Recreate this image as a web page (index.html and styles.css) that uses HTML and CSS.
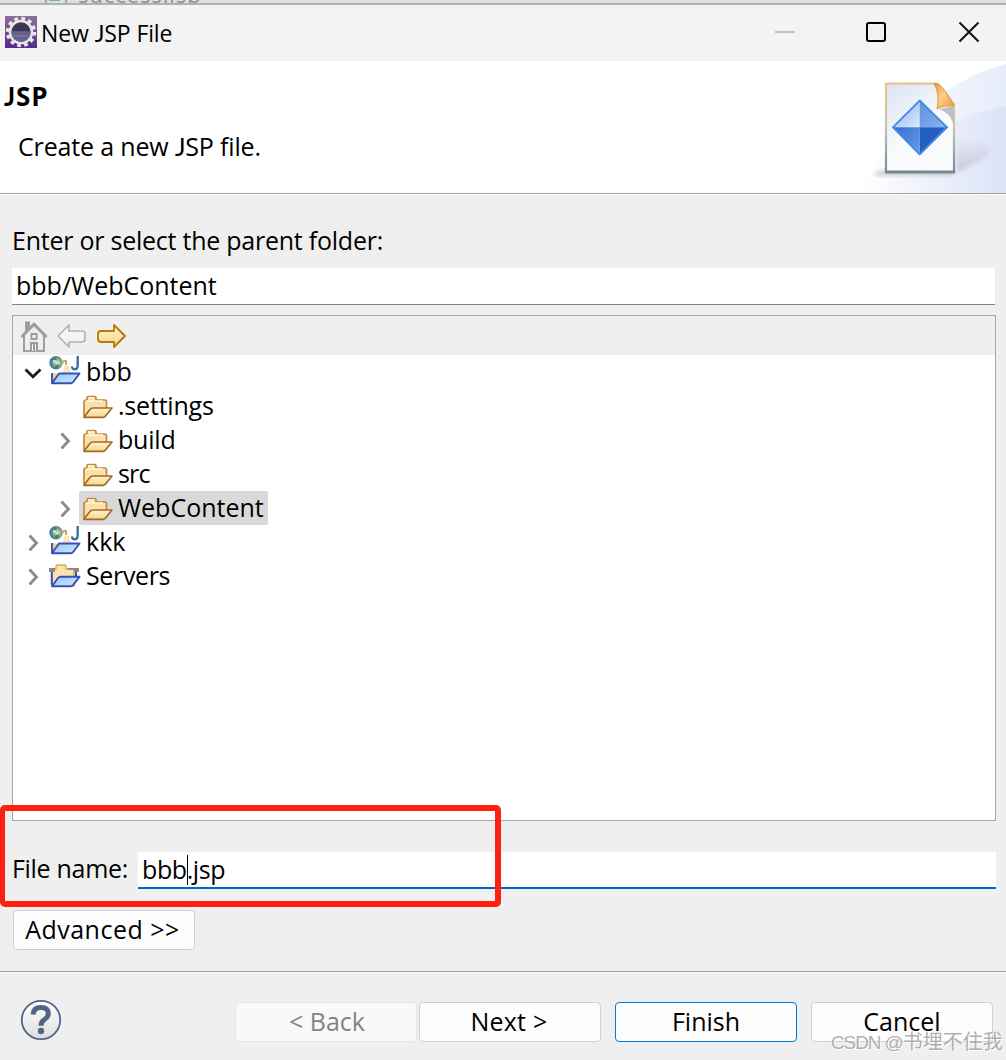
FILE: index.html
```
<!DOCTYPE html>
<html>
<head>
	<meta charset="utf-8">
	<title>New JSP File</title>
	<link rel="stylesheet" href="styles.css">
</head>
<body>
	<svg class="defs" width="0" height="0">
		<defs>
			<linearGradient id="gold" x1="0" y1="0" x2="0" y2="1"><stop offset="0" stop-color="#fff3d2"/><stop offset="1" stop-color="#f7d685"/></linearGradient>
			<linearGradient id="sky" x1="0" y1="0" x2="1" y2="1"><stop offset="0" stop-color="#8fc8f6"/><stop offset="1" stop-color="#cfeafe"/></linearGradient>
			<radialGradient id="earth" cx=".6" cy=".5"><stop offset="0" stop-color="#f0eeb4"/><stop offset=".5" stop-color="#8fb391"/><stop offset="1" stop-color="#47789c"/></radialGradient>
		</defs>
		<symbol id="folder" viewBox="0 0 32 32">
			<path d="M2 26V12q0-2 2-2h1V8q0-1.500 1.500-1.500h6Q14 6.500 14 8v2h9q1.500 0 1.500 1.500V18" fill="#fbe1a8" stroke="#c5893f" stroke-width="1.700"/>
			<path d="M4 11h17M6 8h6" stroke="#fff5df" stroke-width="1.500"/>
			<path d="M2 27 7.500 20Q9 18 11 18H30L23.500 26Q22.500 27.300 21 27.300H2z" fill="url(#gold)" stroke="#a3692c" stroke-width="1.700" stroke-linejoin="round"/>
		</symbol>
		<symbol id="webproject" viewBox="0 0 32 32">
			<path d="M3 17v10M12 18q3-3 3-8h5l2 8z" fill="#fbe5b4"/>
			<path d="M4 17v8l6-7z" fill="#f7cf82"/>
			<circle cx="7" cy="6.800" r="6.700" fill="url(#earth)"/>
			<path d="M3 4 6 1.500 8 3 5 6zM6 10l4-2-1 4-3 1z" fill="#3e8559"/>
			<path d="M4 4h3v3H4z" fill="#b9dcf1"/>
			<path d="M13 8q1-4 4-3v4" fill="none" stroke="#cfa16d" stroke-width="2"/>
			<path d="M28.700 0v9q0 4.300-3 4.300-2.500 0-2.700-2.800" fill="none" stroke="#3a73a2" stroke-width="2.400"/>
			<path d="M3 17v10.500M3 27.300 10 17.500H30.500L24 26.200Q23 27.300 22 27.300H3z" fill="url(#sky)" stroke="#394fb5" stroke-width="1.900" stroke-linejoin="round"/>
		</symbol>
		<symbol id="project" viewBox="0 0 32 32">
			<path d="M3 12v14h22V9H17V6.500Q17 5 15.500 5h-7Q7 5 7 6.500V9H4z" fill="#fbe3ab" stroke="#d7a94c" stroke-width="1.300"/>
			<path d="M0 8h6v4H0zM19 8h11v4H25V10h-6z" fill="#96828c"/>
			<path d="M2.800 12v13M27 12v5" stroke="#394fb5" stroke-width="2"/>
			<path d="M3 26.300 9 18Q10 16.800 12 16.800H30.500L24 25.200Q23 26.300 22 26.300H3z" fill="url(#sky)" stroke="#394fb5" stroke-width="1.900" stroke-linejoin="round"/>
		</symbol>
		<symbol id="right" viewBox="0 0 18 18">
			<path d="M5.500 2.500 12.500 10 5.500 17.500" fill="none" stroke="#8a8a8a" stroke-width="2.800"/>
		</symbol>
		<symbol id="down" viewBox="0 0 18 18">
			<path d="M1.500 6.500 9 13.700 16.500 6.500" fill="none" stroke="#1c1c1c" stroke-width="2.800"/>
		</symbol>
	</svg>

	<div class="behind">
		<svg class="behind_icon" width="22" height="4" viewBox="0 0 22 4"><path d="M1 0v4M21 0v4" stroke="#b5a68c" stroke-width="2"/><path d="M4 0h11v1H4z" fill="#7bb38b"/></svg>
		<span>success.jsp</span>
	</div>
	<div class="titlebar">
		<svg width="32" height="32" viewBox="0 0 32 32">
			<defs><linearGradient id="plum" x1="0" y1="0" x2="0" y2="1"><stop offset="0" stop-color="#8d7099"/><stop offset="1" stop-color="#56298b"/></linearGradient></defs>
			<path d="M0 0h32v32H0z" fill="url(#plum)"/>
			<circle cx="16" cy="16" r="13.200" fill="none" stroke="#ece8e6" stroke-width="4" stroke-dasharray="3.600 3.312"/>
			<circle cx="16" cy="16" r="11" fill="#3b3658" stroke="#e8e4de" stroke-width="2.600"/>
			<path d="M6.500 16.500h19a9.500 9.500 0 0 1-19 0" fill="#67608f"/>
			<path d="M7 16h18M8 20h16" stroke="#8580a7"/>
		</svg>
		<span class="title">New <span class="j">J</span>SP File</span>
		<svg class="controls" width="206" height="22" viewBox="0 0 206 22">
			<path d="M0 11h20" stroke="#c1c1c1" stroke-width="2"/>
			<rect x="92" y="2" width="18" height="18" rx="2" fill="none" stroke="#000" stroke-width="2"/>
			<path d="M184.500 1.500l19 19M203.500 1.500l-19 19" stroke="#111" stroke-width="2"/>
		</svg>
	</div>
	<div class="header">
		<div class="header_text">
			<h1><span class="j">J</span>SP</h1>
			<p class="description">Create a new <span class="j">J</span>SP file.</p>
		</div>
		<svg width="146" height="132" viewBox="0 0 146 132">
			<defs>
				<linearGradient id="wave" x1="0" y1="0" x2="1" y2="0"><stop offset="0" stop-color="#fff"/><stop offset="1" stop-color="#dce3f7"/></linearGradient>
				<linearGradient id="wave2" x1="0" y1="0" x2="1" y2="0"><stop offset="0" stop-color="#fff"/><stop offset="1" stop-color="#e6ecfa"/></linearGradient>
				<linearGradient id="page" x1="0" y1="0" x2=".6" y2="1"><stop offset="0" stop-color="#dae3f2"/><stop offset=".6" stop-color="#f8fafd"/><stop offset="1" stop-color="#fafbfe"/></linearGradient>
				<linearGradient id="edge" x1="0" y1="0" x2="0" y2="1"><stop offset="0" stop-color="#eac48c"/><stop offset=".5" stop-color="#c5c4b3"/><stop offset="1" stop-color="#758e94"/></linearGradient>
				<linearGradient id="curl" x1="0" y1="0" x2="1" y2="1"><stop offset="0" stop-color="#dc9841"/><stop offset=".45" stop-color="#ffcf8b"/><stop offset="1" stop-color="#e99533"/></linearGradient>
				<linearGradient id="shadow" x1="0" y1="0" x2="0" y2="1"><stop offset="0" stop-color="#b9aec8" stop-opacity="0"/><stop offset="1" stop-color="#bfb2c6" stop-opacity=".65"/></linearGradient>
				<linearGradient id="tl" x1="0" y1="0" x2="1" y2="1"><stop offset="0" stop-color="#7eafea"/><stop offset="1" stop-color="#ddecff"/></linearGradient>
				<linearGradient id="tr" x1="0" y1="0" x2="1" y2="1"><stop offset="0" stop-color="#5d8fe3"/><stop offset="1" stop-color="#8cb2ef"/></linearGradient>
				<linearGradient id="bl" x1="0" y1="0" x2="1" y2="1"><stop offset="0" stop-color="#3269cf"/><stop offset="1" stop-color="#6ba1eb"/></linearGradient>
				<filter id="soft" x="-20%" y="-20%" width="140%" height="140%"><feGaussianBlur stdDeviation="2"/></filter>
			</defs>
			<path d="M0 132Q50 30 146 3v129z" fill="url(#wave2)"/>
			<path d="M0 132Q60 62 146 45v87z" fill="url(#wave)"/>
			<path d="M95 78h33v17L97 112z" fill="url(#shadow)" filter="url(#soft)"/>
			<path d="M12 113q12-5 16-4h66l3 4-8 2H18z" fill="#d5cad6" filter="url(#soft)"/>
			<path d="M26 22.700H75L94 43V111H26z" fill="url(#page)" stroke="url(#edge)" stroke-width="2.200"/>
			<path d="M25 111H95" stroke="#718a8f" stroke-width="3"/>
			<path d="M79 48 93 45V62Q90 52 79 48z" fill="#8d929a" opacity=".55"/>
			<path d="M74 22.500Q80 32 77 48q6-4 17-3Q87 30 78 22.500z" fill="url(#curl)" stroke="#db963b" stroke-width="1"/>
			<path d="M59.700 39V66.200H32z" fill="url(#tl)"/>
			<path d="M59.700 39V66.200H88z" fill="url(#tr)"/>
			<path d="M59.700 94V66.200H32z" fill="url(#bl)"/>
			<path d="M59.700 94V66.200H88z" fill="#235fc4"/>
			<path d="M59.700 39.500 87 66.200 59.700 93.500 33 66.200z" fill="none" stroke="#438ad9" stroke-width="1.800"/>
		</svg>
	</div>

	<div class="content">
		<label class="parent_label">Enter or select the parent folder:</label>
		<div class="input"><span class="parent">bbb/WebContent</span></div>
		<div class="tree">
			<div class="toolbar">
				<svg width="110" height="32" viewBox="0 0 110 32">
					<path d="M4 14v17h20V14L14 5z" fill="#ededed" stroke="#a0a0a0" stroke-width="2"/>
					<path d="M1.500 17 14 4 26.500 17M6.500 11V3h2v6" fill="none" stroke="#9c9c9c" stroke-width="2.800"/>
					<path d="M11.500 14h5v5h-5zM11 31v-8h6v8" fill="#f5f5f5" stroke="#9c9c9c" stroke-width="2"/>
					<path d="M14 23v8" stroke="#9c9c9c" stroke-width="2"/>
					<path d="M38 16 49 5v6h13q3 0 3 3v5q0 3-3 3H49v5z" fill="#f4f4f4" stroke="#b3b3b3" stroke-width="1.700" stroke-linejoin="round"/>
					<path d="M105 16 94 5v6H81q-3 0-3 3v5q0 3 3 3H94v5z" fill="url(#gold)" stroke="#b57a08" stroke-width="1.800" stroke-linejoin="round"/>
				</svg>
			</div>
			<div class="row"><svg class="arrow"><use href="#down"/></svg><span class="item"><svg class="icon"><use href="#webproject"/></svg><span class="t_bbb">bbb</span></span></div>
			<div class="row child"><span class="arrow"></span><span class="item"><svg class="icon"><use href="#folder"/></svg><span class="t_settings">.settings</span></span></div>
			<div class="row child"><svg class="arrow"><use href="#right"/></svg><span class="item"><svg class="icon"><use href="#folder"/></svg><span class="t_build">build</span></span></div>
			<div class="row child"><span class="arrow"></span><span class="item"><svg class="icon"><use href="#folder"/></svg><span class="t_src">src</span></span></div>
			<div class="row child"><svg class="arrow"><use href="#right"/></svg><span class="item selected"><svg class="icon"><use href="#folder"/></svg><span class="t_web">WebContent</span></span></div>
			<div class="row"><svg class="arrow"><use href="#right"/></svg><span class="item"><svg class="icon"><use href="#webproject"/></svg><span class="t_kkk">kkk</span></span></div>
			<div class="row"><svg class="arrow"><use href="#right"/></svg><span class="item"><svg class="icon"><use href="#project"/></svg><span class="t_servers">Servers</span></span></div>
		</div>
		<div class="file">
			<label class="file_label">File name:</label>
			<div class="input focus"><span class="file_value">bbb<i class="caret"></i>.jsp</span></div>
		</div>
		<button type="button" class="advanced">Advanced &gt;&gt;</button>
	</div>

	<div class="footer">
		<svg class="help" width="42" height="42" viewBox="0 0 42 42">
			<defs><linearGradient id="ball" x1="0" y1="0" x2="0" y2="1"><stop offset="0" stop-color="#fff"/><stop offset="1" stop-color="#dedede"/></linearGradient></defs>
			<circle cx="21" cy="21" r="19.200" fill="url(#ball)" stroke="#536587" stroke-width="1.800"/>
			<path d="M13 15.500Q13.500 8.500 21 8.500q7.300 0 7.300 6 0 3.500-3.800 6-3.500 2.200-3.500 6.200" fill="none" stroke="#536587" stroke-width="5"/>
			<circle cx="21" cy="32" r="3.200" fill="#536587"/>
		</svg>
		<button type="button" class="back" disabled>&lt; Back</button>
		<button type="button" class="next">Next &gt;</button>
		<button type="button" class="finish">Finish</button>
		<button type="button" class="cancel">Cancel</button>
	</div>

	<div class="highlight"></div>
	<div class="watermark"><span class="latin">CSDN @</span>书埋不住我</div>
</body>
</html>
```

FILE: styles.css
```
* {
	box-sizing: border-box;
}
body {
	margin: 0;
	width: 1006px;
	height: 1060px;
	overflow: hidden;
	background: #efefef;
	color: #000;
	font: 25px/34px "Open Sans", "Noto Sans", sans-serif;
	white-space: nowrap;
}
svg {
	display: block;
	flex: none;
}
.defs {
	position: absolute;
}
.j {
	font-family: Lato, sans-serif;
	line-height: 1;
}
.behind {
	display: flex;
	height: 5px;
	padding-left: 45px;
	gap: 11px;
	overflow: hidden;
	background: #dedfe4;
	border-bottom: 2px solid #b0b1b5;
	color: #8e9094;
	font-size: 22px;
	line-height: 30px;
}
.behind span {
	margin-top: -21px;
	letter-spacing: 0.9px;
}
.titlebar {
	display: flex;
	align-items: center;
	height: 56px;
	padding: 0 25px 2px 5px;
	background: #f3f3f3;
}
.title {
	margin: 2px 0 0 4px;
	font-size: 23px;
	letter-spacing: -0.1px;
}
.controls {
	margin-left: auto;
}
.header {
	display: flex;
	justify-content: space-between;
	height: 134px;
	background: #fff;
	border-bottom: 1px solid #fff;
	box-shadow: inset 0 -1px #a0a0a0;
}
.header_text {
	padding: 18px 0 0 4px;
}
h1 {
	margin: 0;
	font-size: 26px;
	font-weight: bold;
	letter-spacing: 0.9px;
}
.description {
	margin: 16px 0 0 14px;
	letter-spacing: -0.16px;
}
.content {
	height: 776px;
	padding: 28px 10px 0 12px;
}
label {
	display: block;
}
.parent_label {
	letter-spacing: -0.24px;
}
.input {
	height: 37px;
	margin-top: 11px;
	padding: 0 4px;
	background: #fff;
	border-bottom: 1px solid #868686;
	width: 983px;
}
.tree {
	height: 506px;
	margin-top: 10px;
	border: 1px solid #a5a6aa;
	background: #fff;
}
.toolbar {
	height: 39px;
	padding: 4px 0 0 7px;
	background: #efefef;
}
.row {
	display: flex;
	align-items: center;
	height: 34px;
	padding-left: 11px;
}
.child {
	padding-left: 43px;
}
.arrow {
	width: 18px;
	height: 18px;
}
.item {
	display: flex;
	height: 34px;
	margin-left: 5px;
	padding: 1px 4px 0 2px;
	line-height: 30px;
}
.icon {
	width: 32px;
	height: 32px;
	margin-right: 5px;
}
.child .icon {
	margin: 0 4px 0 1px;
}
.selected {
	background: #d9d9d9;
	border-radius: 2px;
}
.t_settings, .t_build {
	letter-spacing: -0.2px;
}
.t_src {
	letter-spacing: -0.8px;
}
.t_servers {
	letter-spacing: -0.35px;
}
.file {
	display: flex;
	align-items: center;
	margin-top: 31px;
}
.file_label {
	width: 126px;
	margin-top: -5px;
	letter-spacing: -0.3px;
}
.focus {
	width: 858px;
	margin: 0;
	border-bottom: 2px solid #0067c0;
}
.file_value {
	letter-spacing: -0.4px;
}
.caret {
	display: inline-block;
	width: 1px;
	height: 30px;
	margin-right: -1px;
	background: #000;
	vertical-align: -6px;
}
button {
	height: 40px;
	padding: 0 0 2px;
	border: 1px solid #d0d0d0;
	border-radius: 4px;
	background: #fdfdfd;
	color: #000;
	font: inherit;
	width: 182px;
}
.advanced {
	display: block;
	margin: 21px 0 0 1px;
	padding-right: 3px;
	letter-spacing: 0.5px;
}
.footer {
	display: flex;
	align-items: center;
	height: 89px;
	padding: 11px 13px 0 20px;
	border-top: 1px solid #a0a0a0;
	box-shadow: inset 0 1px #fff;
}
.help {
	margin-bottom: 4px;
}
.back {
	margin-left: auto;
	border-color: #e7e7e7;
	background: #f9f9f9;
	color: #838383;
	padding-left: 2px;
}
.next {
	margin-left: 2px;
	padding-right: 2px;
	letter-spacing: 0.2px;
}
.finish {
	margin: 0 14px;
	border-color: #0078d4;
}
.highlight {
	position: absolute;
	left: 0;
	top: 805px;
	width: 501px;
	height: 102px;
	border: 6px solid #ff2013;
	border-left-width: 5px;
	border-radius: 5px;
}
.watermark {
	position: absolute;
	left: 831px;
	top: 1027px;
	color: rgba(150, 150, 150, 0.75);
	font: 20px/30px "Liberation Sans", "Noto Sans CJK SC", sans-serif;
	text-shadow: 1px 1px #fff;
}
.latin {
	font-size: 19px;
	letter-spacing: -1.1px;
}
```
